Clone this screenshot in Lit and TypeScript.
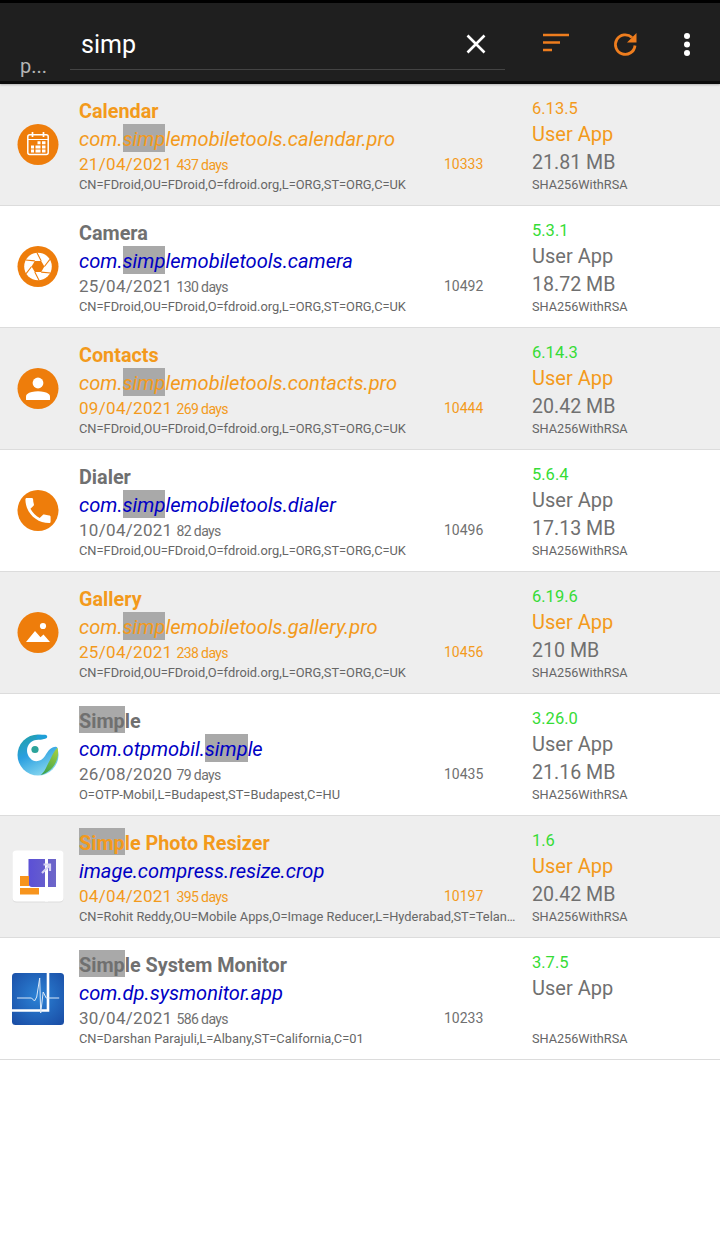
import { LitElement, html, css, svg } from 'lit';
import { customElement } from 'lit/decorators.js';

type App = {
  name: string;
  pkg: string;
  date: string;
  days: string;
  cert: string;
  uid: string;
  version: string;
  size: string;
  icon: string;
  pkgBlue?: boolean;
};

const ORANGE = '#ee7d0b';

const apps: App[] = [
  { name: 'Calendar', pkg: 'com.simplemobiletools.calendar.pro', date: '21/04/2021', days: '437 days', cert: 'CN=FDroid,OU=FDroid,O=fdroid.org,L=ORG,ST=ORG,C=UK', uid: '10333', version: '6.13.5', size: '21.81 MB', icon: 'calendar' },
  { name: 'Camera', pkg: 'com.simplemobiletools.camera', date: '25/04/2021', days: '130 days', cert: 'CN=FDroid,OU=FDroid,O=fdroid.org,L=ORG,ST=ORG,C=UK', uid: '10492', version: '5.3.1', size: '18.72 MB', icon: 'camera' },
  { name: 'Contacts', pkg: 'com.simplemobiletools.contacts.pro', date: '09/04/2021', days: '269 days', cert: 'CN=FDroid,OU=FDroid,O=fdroid.org,L=ORG,ST=ORG,C=UK', uid: '10444', version: '6.14.3', size: '20.42 MB', icon: 'contacts' },
  { name: 'Dialer', pkg: 'com.simplemobiletools.dialer', date: '10/04/2021', days: '82 days', cert: 'CN=FDroid,OU=FDroid,O=fdroid.org,L=ORG,ST=ORG,C=UK', uid: '10496', version: '5.6.4', size: '17.13 MB', icon: 'dialer' },
  { name: 'Gallery', pkg: 'com.simplemobiletools.gallery.pro', date: '25/04/2021', days: '238 days', cert: 'CN=FDroid,OU=FDroid,O=fdroid.org,L=ORG,ST=ORG,C=UK', uid: '10456', version: '6.19.6', size: '210 MB', icon: 'gallery' },
  { name: 'Simple', pkg: 'com.otpmobil.simple', date: '26/08/2020', days: '79 days', cert: 'O=OTP-Mobil,L=Budapest,ST=Budapest,C=HU', uid: '10435', version: '3.26.0', size: '21.16 MB', icon: 'otp' },
  { name: 'Simple Photo Resizer', pkg: 'image.compress.resize.crop', date: '04/04/2021', days: '395 days', cert: 'CN=Rohit Reddy,OU=Mobile Apps,O=Image Reducer,L=Hyderabad,ST=Telan…', uid: '10197', version: '1.6', size: '20.42 MB', icon: 'resizer', pkgBlue: true },
  { name: 'Simple System Monitor', pkg: 'com.dp.sysmonitor.app', date: '30/04/2021', days: '586 days', cert: 'CN=Darshan Parajuli,L=Albany,ST=California,C=01', uid: '10233', version: '3.7.5', size: '', icon: 'monitor' },
];

const disc = svg`<circle cx="26" cy="26.500" r="20.500" fill="${ORANGE}"/>`;

const icons: Record<string, unknown> = {
  calendar: svg`${disc}
    <rect x="15.800" y="16.800" width="20.400" height="19.700" rx="2" fill="none" stroke="#fff" stroke-width="1.500"/>
    <path d="M20.500 14v5M31.500 14v5" stroke="#fff" stroke-width="1.700" fill="none"/>
    <path d="M16 21.500h20" stroke="#fff" stroke-width="1" fill="none"/>
    <path fill="#fff" d="M25.500 23.300h3v3h-3zM30 23.300h3.500v3H30zM19 27.500h3v3h-3zM23.500 27.500h5v3h-5zM30 27.500h3.500v3H30zM19 31.500h3v3h-3zM23.500 31.500h5v3h-5zM30 31.500h3.500v3H30z"/>`,
  camera: svg`${disc}
    <circle cx="26" cy="26.500" r="13.800" fill="#fff"/>
    <path fill="${ORANGE}" d="M29.200 20.900 32.400 26.500 29.200 32.100H22.800L19.600 26.500 22.800 20.900z"/>
    <g stroke="${ORANGE}" stroke-width="1.100" fill="none">
      <path d="M29.200 20.900 25 12.800M32.400 26.500 37.900 19.400M29.200 32.100 38.400 33M22.800 32.100 27 40.200M19.600 26.500 14.100 33.600M22.800 20.900 13.600 20"/>
    </g>`,
  contacts: svg`${disc}
    <circle cx="26" cy="21" r="5.400" fill="#fff"/>
    <path fill="#fff" d="M14 37.500v-2.800c0-1 .3-1.800 1-2.400 2.500-2.200 6.800-3 11-3s8.500.8 11 3c.7.600 1 1.400 1 2.400v2.800c0 .4-.3.600-.7.600H14.700c-.4 0-.7-.2-.7-.6z"/>`,
  dialer: svg`${disc}
    <g transform="translate(9.200 9.700) scale(1.400)">
      <path fill="#fff" d="M6.620 10.790c1.440 2.830 3.760 5.140 6.590 6.590l2.200-2.200c.27-.27.67-.36 1.020-.24 1.120.37 2.330.57 3.570.57.550 0 1 .45 1 1V20c0 .55-.45 1-1 1-9.390 0-17-7.610-17-17 0-.55.450-1 1-1h3.500c.55 0 1 .45 1 1 0 1.250.2 2.450.57 3.570.11.350.03.740-.25 1.020l-2.200 2.200z"/>
    </g>`,
  gallery: svg`${disc}
    <circle cx="31" cy="20" r="3.100" fill="#fff"/>
    <path fill="#fff" d="M14 36 23 25l5.500 6.300 3-2.800L38 36z"/>`,
  otp: svg`
    <defs>
      <linearGradient id="otpa" x1="0" y1="0" x2="0.500" y2="1"><stop offset="0" stop-color="#1f9fa0"/><stop offset="0.500" stop-color="#2a9fe0"/><stop offset="1" stop-color="#7fd2ee"/></linearGradient>
      <linearGradient id="otpb" x1="0.300" y1="1" x2="0.800" y2="0"><stop offset="0" stop-color="#3da24d"/><stop offset="1" stop-color="#a5cf3e"/></linearGradient>
    </defs>
    <circle cx="26" cy="27" r="20.500" fill="url(#otpa)"/>
    <path fill="#fff" d="M33 7.500c6 0 10 2 14 7v5C41 17 37 21 33 28c-4 6-11 7-15 2-6-7-2-17 6-18 3-.4 7 0 9-1.500z"/>
    <circle cx="23" cy="21.500" r="3.600" fill="#2ba39a"/>
    <path fill="#1f9fd8" d="M33 6.800c1.700 0 2.200 1 2.200 2s-.8 1.900-2.200 1.900c-3 0-6-.4-9-.1l1-3.200c3-.8 5.500-.6 8-.6z"/>
    <path fill="url(#otpb)" d="M45.500 19.500c2.300 10-3 24-17 27.500 5-3.500 6-9 9-14 2-4 4.500-10 8-13.500z"/>`,
  resizer: svg`
    <rect x="0.500" y="1.500" width="51" height="51" rx="4" fill="#dcdcdc"/>
    <rect x="0.500" y="0.500" width="51" height="51" rx="4" fill="#fff"/>
    <defs><linearGradient id="res" x1="0" y1="0" x2="1" y2="0"><stop offset="0" stop-color="#5b50d6"/><stop offset="1" stop-color="#6d66c8"/></linearGradient></defs>
    <path fill="url(#res)" d="M16.500 9H44v28H20c-2 0-3.500-1.500-3.500-3.500z"/>
    <rect x="33" y="0.500" width="3" height="51" fill="#fff"/>
    <rect x="8" y="26" width="9" height="10" fill="#f7941d"/>
    <rect x="8" y="38" width="19" height="6.500" fill="#f7941d"/>
    <path d="M30 23l7-7M31.500 14.500h6.500V21" stroke="#d6d3f2" stroke-width="2.200" fill="none"/>`,
  monitor: svg`
    <defs><radialGradient id="mon" cx="0.500" cy="0.450" r="0.700"><stop offset="0" stop-color="#2c83d6"/><stop offset="1" stop-color="#1a4ea6"/></radialGradient></defs>
    <rect x="0" y="1" width="52" height="52" rx="3.500" fill="url(#mon)"/>
    <path d="M36 1v37.500H0" fill="none" stroke="#fff" stroke-width="2.600"/>
    <path d="M5 26h14.500l3 3 2.200-4 3-19 1 35 2.500-21 3 6h13" fill="none" stroke="#dbe9f8" stroke-width="1"/>`,
};

@customElement('app-root')
export class AppRoot extends LitElement {
  static styles = css`
    :host {
      display: block;
      width: 720px;
      height: 1248px;
      background: #fff;
      font-family: Roboto, sans-serif;
      overflow: hidden;
    }

    .topbar {
      height: 84px;
      box-sizing: border-box;
      border-top: 3px solid #000;
      border-bottom: 3px solid #0c0c0c;
      background: #1f1f1f;
      display: flex;
      align-items: stretch;
      box-shadow: 0 1px 2px rgba(0, 0, 0, 0.25);
      position: relative;
    }

    .crumb {
      width: 70px;
      box-sizing: border-box;
      padding: 50px 0 0 20px;
      color: #b5b5b5;
      font-size: 20px;
      line-height: 26px;
    }

    .search {
      width: 435px;
      height: 67px;
      box-sizing: border-box;
      border-bottom: 1px solid #444;
      display: flex;
      align-items: flex-start;
      justify-content: space-between;
      padding: 26px 17px 0 11px;
    }

    .search span {
      color: #fff;
      font-size: 25px;
      line-height: 32px;
    }

    .search svg {
      margin-top: 3px;
    }

    .actions {
      flex: 1;
      display: flex;
      align-items: flex-start;
      padding-top: 28px;
    }

    .actions svg {
      display: block;
    }

    .sort { margin: 2px 0 0 38px; }
    .refresh { margin-left: 42px; }
    .more { margin: 1px 0 0 45px; }

    .row {
      height: 122px;
      box-sizing: border-box;
      border-bottom: 1px solid #dcdcdc;
      display: grid;
      grid-template-columns: 79px 453px 1fr;
      background: #fff;
    }

    .row.alt {
      background: #eeeeee;
    }

    .icon {
      display: flex;
      align-items: center;
      padding-left: 12px;
    }

    .icon svg {
      display: block;
    }

    .main {
      min-width: 0;
      padding: 12px 12px 0 0;
    }

    .name {
      height: 28px;
      font-size: 19.8px;
      line-height: 32px;
      font-weight: 700;
      color: #707070;
      white-space: nowrap;
    }

    .name mark {
      height: 27px;
      line-height: 32px;
    }

    .alt .name {
      color: #f39a1c;
    }

    .pkg {
      height: 28px;
      font-size: 20.1px;
      line-height: 30px;
      font-style: italic;
      color: #0000c4;
      white-space: nowrap;
    }

    .pkg mark {
      height: 28px;
      line-height: 30px;
    }

    .pkg.warm {
      color: #f39a1c;
    }

    mark {
      display: inline-block;
      background: #a9a9a9;
      color: inherit;
    }

    .meta {
      display: grid;
      grid-template-columns: 365px 1fr;
      line-height: 24px;
      color: #707070;
    }

    .alt .meta {
      color: #f39a1c;
    }

    .date {
      font-size: 17px;
      letter-spacing: 0.3px;
    }

    .days {
      font-size: 14px;
      letter-spacing: -0.6px;
    }

    .uid {
      font-size: 14px;
      line-height: 24px;
    }

    .cert {
      font-size: 12.85px;
      line-height: 16px;
      color: #666;
      white-space: nowrap;
      overflow: hidden;
      text-overflow: ellipsis;
    }

    .side {
      padding-top: 12px;
      color: #707070;
      display: grid;
      grid-template-rows: 24px 28px 28px 16px;
      align-items: center;
    }

    .version {
      font-size: 16.5px;
      color: #36dc36;
    }

    .first .version,
    .alt .kind {
      color: #f39a1c;
    }

    .kind {
      font-size: 20px;
    }

    .size {
      font-size: 19.6px;
      margin-top: 1px;
    }

    .sig {
      font-size: 12.7px;
      margin-top: 1px;
      color: #666;
    }
  `;

  private mark(text: string) {
    const at = text.toLowerCase().indexOf('simp');
    if (at < 0) return text;
    return html`${text.slice(0, at)}<mark>${text.slice(at, at + 4)}</mark>${text.slice(at + 4)}`;
  }

  private renderRow(app: App, i: number) {
    const alt = i % 2 === 0;
    const warm = alt && !app.pkgBlue;
    return html`
      <div class="row ${alt ? 'alt' : ''} ${i === 0 ? 'first' : ''}">
        <div class="icon">
          <svg width="52" height="53" viewBox="0 0 52 53">${icons[app.icon]}</svg>
        </div>
        <div class="main">
          <div class="name">${this.mark(app.name)}</div>
          <div class="pkg ${warm ? 'warm' : ''}">${this.mark(app.pkg)}</div>
          <div class="meta">
            <div><span class="date">${app.date}</span> <span class="days">${app.days}</span></div>
            <div class="uid">${app.uid}</div>
          </div>
          <div class="cert">${app.cert}</div>
        </div>
        <div class="side">
          <div class="version">${app.version}</div>
          <div class="kind">User App</div>
          <div class="size">${app.size}</div>
          <div class="sig">SHA256WithRSA</div>
        </div>
      </div>
    `;
  }

  render() {
    return html`
      <div class="topbar">
        <div class="crumb">p...</div>
        <div class="search">
          <span>simp</span>
          <svg width="24" height="24" viewBox="0 0 24 24"><path d="M3.500 3.500l17 17M20.500 3.500l-17 17" stroke="#fff" stroke-width="2.600" fill="none"/></svg>
        </div>
        <div class="actions">
          <svg class="sort" width="27" height="20" viewBox="0 0 27 20"><path d="M0 2h26M0 9.500h17M0 17h9" stroke="#ee7d1e" stroke-width="2.600" fill="none"/></svg>
          <svg class="refresh" width="26" height="26" viewBox="0 0 26 26"><path d="M20 6.500a9.800 9.800 0 1 0 3 8" fill="none" stroke="#ee7d1e" stroke-width="2.800"/><path d="M24.500 2v9.500H15z" fill="#ee7d1e"/></svg>
          <svg class="more" width="8" height="24" viewBox="0 0 8 24"><circle cx="4" cy="4" r="3" fill="#fff"/><circle cx="4" cy="12.500" r="3" fill="#fff"/><circle cx="4" cy="21" r="3" fill="#fff"/></svg>
        </div>
      </div>
      <div class="list">${apps.map((a, i) => this.renderRow(a, i))}</div>
    `;
  }
}
